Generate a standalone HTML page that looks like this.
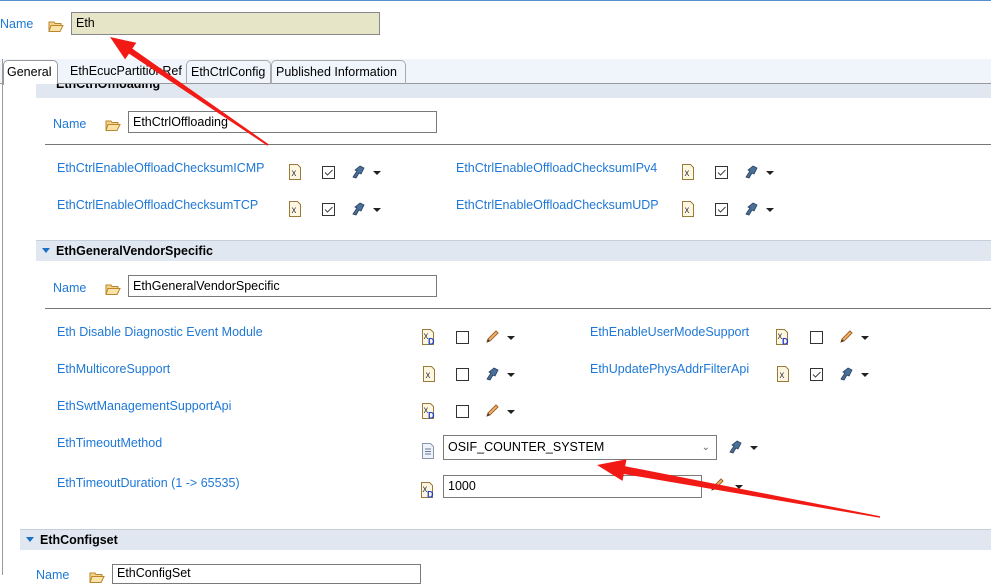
<!DOCTYPE html>
<html><head><meta charset="utf-8"><style>
*{margin:0;padding:0;box-sizing:border-box}
body{width:991px;height:575px;overflow:hidden;background:#fff;font-family:"Liberation Sans","Noto Sans CJK SC",sans-serif;font-size:12.5px;color:#000;position:relative}
.a{position:absolute}
.lbl{position:absolute;color:#1e78d6;font-size:12.5px;white-space:nowrap}
.tb{position:absolute;border:1px solid #7a7a7a;background:#fff;height:22px;padding:2px 4px;font-size:12.5px;line-height:16px}
.hd{position:absolute;background:#e0e7f0;font-weight:bold;font-size:12.5px;line-height:21px;height:21px;border-top:1px solid #c5cfdc}
.tri{display:inline-block;width:0;height:0;border-left:4px solid transparent;border-right:4px solid transparent;border-top:5px solid #1a6fc8;margin:0 6px 2px 6px;vertical-align:middle}
.cb{position:absolute;width:13px;height:13px;border:1px solid #333;background:#fff}
.dd{position:absolute;width:0;height:0;border-left:4px solid transparent;border-right:4px solid transparent;border-top:4px solid #222}
.sep{position:absolute;height:1px;background:#777}
</style></head><body>
<svg width="0" height="0" style="position:absolute"><defs>
<symbol id="fold" viewBox="0 0 16 14"><path d="M1 3h5l1 1.5h6v2H4L1 12z" fill="#f5d48a" stroke="#b8862e"/><path d="M3 6.5h12l-3 6H1z" fill="#fbe3a6" stroke="#b8862e"/></symbol>
<symbol id="xf" viewBox="0 0 12 16"><path d="M.5.5h8l3 3v12H.5z" fill="#fdf6e0" stroke="#9a7a3a"/><text x="2.5" y="12" font-size="8" font-family="Liberation Mono" fill="#223">X</text></symbol>
<symbol id="xd" viewBox="0 0 14 16"><path d="M.5.5h8l3 3v12H.5z" fill="#fdf6e0" stroke="#9a7a3a"/><text x="1.5" y="10" font-size="8" font-family="Liberation Mono" fill="#223">X</text><text x="6" y="15.5" font-size="9" font-weight="bold" font-family="Liberation Sans" fill="#1d3fd0">D</text></symbol>
<symbol id="wr" viewBox="0 0 14 14"><path d="M9 1L4 5l2 1-4 6 3 1 3-5 2 1 3-6z" fill="#4a6f98" stroke="#243c5c" stroke-width=".8"/></symbol>
<symbol id="pen" viewBox="0 0 14 14"><path d="M2 12l1-3 8-8 2 2-8 8z" fill="#f2b66a" stroke="#a0602a"/><path d="M2 12l1-3 2 2z" fill="#333"/></symbol>
<symbol id="doc" viewBox="0 0 12 16"><path d="M.5.5h8l3 3v12H.5z" fill="#eef2fa" stroke="#8a96aa"/><path d="M3 6h6M3 8.5h6M3 11h6" stroke="#6a7a9a"/></symbol>
</defs></svg>

<div class="a" style="left:0;top:0;width:991px;height:1px;background:#5a8fd0"></div>
<div class="lbl" style="left:0;top:17px">Name</div>
<svg class="a" style="left:48px;top:19px" width="16" height="14"><use href="#fold"/></svg>
<div class="tb" style="left:71px;top:12px;width:309px;height:23px;background:#e6e5c8;border-color:#888">Eth</div>

<div class="a" style="left:0;top:59px;width:991px;height:25px;background:#f0f5fc;border-bottom:1px solid #999"></div>
<div class="a" style="left:2px;top:59px;width:1px;height:516px;background:#999"></div>
<div class="a" style="left:3px;top:60px;width:55px;height:25px;background:#fff;border:1px solid #999;border-bottom:none;border-radius:5px 5px 0 0;padding:4px 3px">General</div>
<div class="a" style="left:70px;top:64px;white-space:nowrap">EthEcucPartitionRef</div>
<div class="a" style="left:186px;top:60px;width:85px;height:24px;border:1px solid #aaa;border-bottom:none;border-radius:5px 5px 0 0;padding:4px 4px;white-space:nowrap">EthCtrlConfig</div>
<div class="a" style="left:271px;top:60px;width:135px;height:24px;border:1px solid #aaa;border-bottom:none;border-radius:5px 5px 0 0;padding:4px 4px;white-space:nowrap">Published Information</div>

<div class="hd" style="left:36px;top:84px;width:955px;height:14px;line-height:6px;overflow:hidden;border-top:none"><span style="position:relative;top:-3px;left:20px">EthCtrlOffloading</span></div>
<div class="lbl" style="left:53px;top:117px">Name</div>
<svg class="a" style="left:105px;top:118px" width="16" height="14"><use href="#fold"/></svg>
<div class="tb" style="left:128px;top:111px;width:309px">EthCtrlOffloading</div>
<div class="sep" style="left:45px;top:144px;width:946px"></div>

<div class="lbl" style="left:57px;top:161px">EthCtrlEnableOffloadChecksumICMP</div>
<div class="lbl" style="left:57px;top:198px">EthCtrlEnableOffloadChecksumTCP</div>
<div class="lbl" style="left:456px;top:161px">EthCtrlEnableOffloadChecksumIPv4</div>
<div class="lbl" style="left:456px;top:198px">EthCtrlEnableOffloadChecksumUDP</div>

<div class="hd" style="left:36px;top:240px;width:955px"><span class="tri"></span>EthGeneralVendorSpecific</div>
<div class="lbl" style="left:53px;top:281px">Name</div>
<svg class="a" style="left:105px;top:282px" width="16" height="14"><use href="#fold"/></svg>
<div class="tb" style="left:128px;top:275px;width:309px">EthGeneralVendorSpecific</div>
<div class="sep" style="left:45px;top:308px;width:946px"></div>

<div class="lbl" style="left:57px;top:325px">Eth Disable Diagnostic Event Module</div>
<div class="lbl" style="left:57px;top:362px">EthMulticoreSupport</div>
<div class="lbl" style="left:57px;top:399px">EthSwtManagementSupportApi</div>
<div class="lbl" style="left:57px;top:436px">EthTimeoutMethod</div>
<div class="lbl" style="left:57px;top:476px">EthTimeoutDuration (1 -&gt; 65535)</div>
<div class="lbl" style="left:590px;top:325px">EthEnableUserModeSupport</div>
<div class="lbl" style="left:590px;top:362px">EthUpdatePhysAddrFilterApi</div>

<svg class="a" style="left:422px;top:443px" width="12" height="16"><use href="#doc"/></svg>
<div class="tb" style="left:443px;top:435px;width:274px;height:25px;line-height:19px">OSIF_COUNTER_SYSTEM<span style="position:absolute;right:6px;top:2px;color:#666;font-size:10px">&#8964;</span></div>
<svg class="a" style="left:728px;top:440px" width="14" height="14"><use href="#wr"/></svg><div class="dd" style="left:750px;top:446px"></div>
<svg class="a" style="left:421px;top:482px" width="14" height="16"><use href="#xd"/></svg>
<div class="tb" style="left:443px;top:475px;width:259px;height:23px;line-height:17px">1000</div>
<svg class="a" style="left:710px;top:478px" width="14" height="14"><use href="#pen"/></svg><div class="dd" style="left:735px;top:485px"></div>

<div class="hd" style="left:20px;top:529px;width:971px"><span class="tri"></span>EthConfigset</div>
<div class="tb" style="left:112px;top:564px;width:309px;height:20px;line-height:12px">EthConfigSet</div>
<div class="lbl" style="left:36px;top:568px">Name</div>
<svg class="a" style="left:89px;top:570px" width="16" height="14"><use href="#fold"/></svg>

<div id="ic"></div>
<script>
var h='';
function row(x,y,ic,chk,tool){
 h+='<svg class="a" style="left:'+x+'px;top:'+(y-2)+'px" width="14" height="16"><use href="#'+ic+'"/></svg>';
 h+='<div class="cb" style="left:'+(x+34)+'px;top:'+y+'px">'+(chk?'<svg width="11" height="11" style="position:absolute;left:0;top:0"><path d="M2 5.5l2.5 2.5 5-5" stroke="#444" fill="none" stroke-width="1"/></svg>':'')+'</div>';
 h+='<svg class="a" style="left:'+(x+63)+'px;top:'+(y-1)+'px" width="14" height="14"><use href="#'+tool+'"/></svg>';
 h+='<div class="dd" style="left:'+(x+85)+'px;top:'+(y+5)+'px"></div>';
}
row(288,166,'xf',1,'wr');row(288,203,'xf',1,'wr');
row(681,166,'xf',1,'wr');row(681,203,'xf',1,'wr');
row(422,331,'xd',0,'pen');row(422,368,'xf',0,'wr');row(422,405,'xd',0,'pen');
row(776,331,'xd',0,'pen');row(776,368,'xf',1,'wr');
document.getElementById('ic').innerHTML=h;
</script>

<svg class="a" style="left:0;top:0" width="991" height="575">
<polygon points="268.6,144.2 132.4,48.6 136.3,42.8 110,37 125.1,59.4 129,53.6 267.4,145.8" fill="#f21a14"/>
<polygon points="880.1,516.2 625.2,466.2 626.5,459.3 597,465 622.5,480.9 623.8,474 879.9,517.8" fill="#f21a14"/>
</svg>
</body></html>
